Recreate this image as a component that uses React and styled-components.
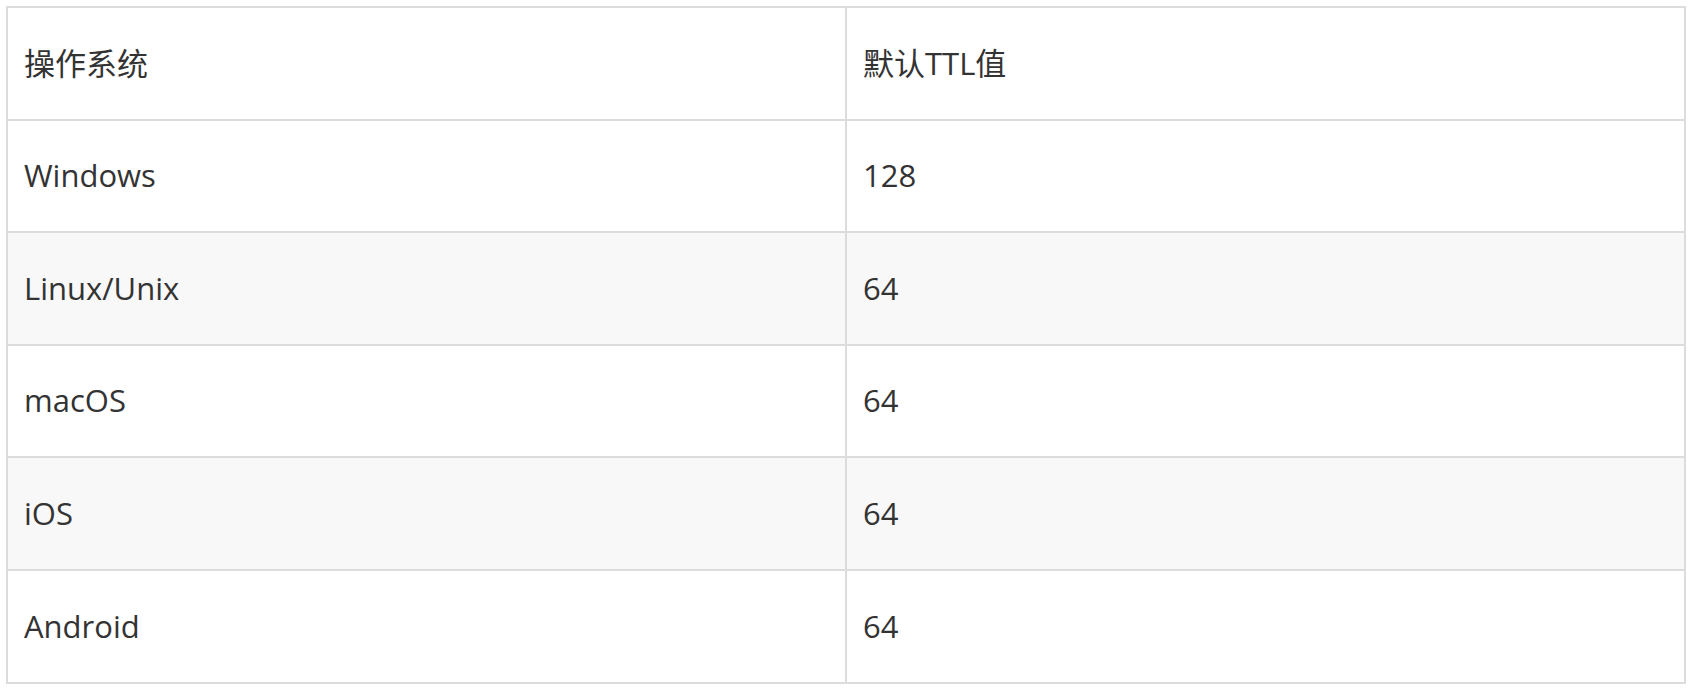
import styled, { createGlobalStyle } from 'styled-components'

const GlobalStyle = createGlobalStyle`
  html, body {
    margin: 0;
    padding: 0;
    background: #fff;
  }
  body {
    font-family: "Open Sans", "Noto Sans CJK SC", sans-serif;
    color: #333;
  }
`

const Page = styled.div`
  padding: 6px 8px 0 6px;
`

const Table = styled.table`
  width: 1680px;
  border-collapse: collapse;
  border: 2px solid #dcdcdc;
  font-size: 31px;
`

const Row = styled.tr`
  background: ${p => (p.$striped ? '#f8f8f8' : '#fff')};
`

const Cell = styled.td`
  width: 50%;
  height: 112.6px;
  box-sizing: border-box;
  padding: 0 16px;
  border: 2px solid #dcdcdc;
  font-weight: 400;
  text-align: left;
  vertical-align: middle;
  line-height: 1.4;
`

const HeadCell = styled(Cell).attrs({ as: 'th' })``

const rows = [
  ['Windows', '128'],
  ['Linux/Unix', '64'],
  ['macOS', '64'],
  ['iOS', '64'],
  ['Android', '64'],
]

export default function App() {
  return (
    <>
      <GlobalStyle />
      <Page>
        <Table>
          <thead>
            <Row>
              <HeadCell>操作系统</HeadCell>
              <HeadCell>默认TTL值</HeadCell>
            </Row>
          </thead>
          <tbody>
            {rows.map(([os, ttl], i) => (
              <Row key={os} $striped={i % 2 === 1}>
                <Cell>{os}</Cell>
                <Cell>{ttl}</Cell>
              </Row>
            ))}
          </tbody>
        </Table>
      </Page>
    </>
  )
}
